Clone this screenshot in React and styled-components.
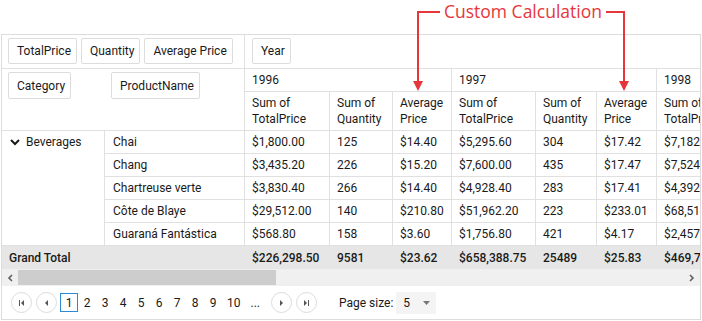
import React from "react";
import styled, { createGlobalStyle, css } from "styled-components";

const RED = "#e5373b";
const LINE = "#e0e0e0";

const GlobalStyle = createGlobalStyle`
  body {
    margin: 0;
    background: #fff;
    font-family: Roboto, "Open Sans", sans-serif;
    font-size: 12px;
    color: #1a1a1a;
  }
`;

const years = ["1996", "1997", "1998"];
const measures = ["Sum of TotalPrice", "Sum of Quantity", "Average Price"];

const rows = [
  { name: "Chai", values: ["$1,800.00", "125", "$14.40", "$5,295.60", "304", "$17.42", "$7,182.00", "399", "$18.00"] },
  { name: "Chang", values: ["$3,435.20", "226", "$15.20", "$7,600.00", "435", "$17.47", "$7,524.00", "396", "$19.00"] },
  { name: "Chartreuse verte", values: ["$3,830.40", "266", "$14.40", "$4,928.40", "283", "$17.41", "$4,392.00", "244", "$18.00"] },
  { name: "Côte de Blaye", values: ["$29,512.00", "140", "$210.80", "$51,962.20", "223", "$233.01", "$68,510.00", "260", "$263.50"] },
  { name: "Guaraná Fantástica", values: ["$568.80", "158", "$3.60", "$1,756.80", "421", "$4.17", "$2,457.00", "546", "$4.50"] },
];

const totals = ["$226,298.50", "9581", "$23.62", "$658,388.75", "25489", "$25.83", "$469,771.34", "16247", "$28.91"];

const App = () => {
  return (
    <Page>
      <GlobalStyle />
      <Callout>Custom Calculation</Callout>
      <Arrows width="702" height="100" viewBox="0 0 702 100">
        <path d="M440 12 H418 V82" />
        <polygon points="413,81 423,81 418,91" />
        <path d="M606 12 H624 V82" />
        <polygon points="619,81 629,81 624,91" />
      </Arrows>

      <Pivot>
        <Viewport>
          <Grid>
            <FieldZone $span={2} $divider>
              <FieldButton>TotalPrice</FieldButton>
              <FieldButton>Quantity</FieldButton>
              <FieldButton>Average Price</FieldButton>
            </FieldZone>
            <FieldZone $span={9} $inset={7}>
              <FieldButton>Year</FieldButton>
            </FieldZone>

            <RowFieldCell>
              <FieldButton $tall>Category</FieldButton>
            </RowFieldCell>
            <RowFieldCell $divider>
              <FieldButton $tall>ProductName</FieldButton>
            </RowFieldCell>
            {years.map((y) => (
              <YearCell key={y}>{y}</YearCell>
            ))}
            {years.map((y) =>
              measures.map((m) => <MeasureCell key={y + m}>{m}</MeasureCell>)
            )}

            {rows.map((r, i) => (
              <React.Fragment key={r.name}>
                {i === 0 && (
                  <GroupCell $rows={rows.length}>
                    <Chevron width="10" height="7" viewBox="0 0 10 7">
                      <polyline points="1,1 5,5 9,1" />
                    </Chevron>
                    Beverages
                  </GroupCell>
                )}
                <ItemCell>{r.name}</ItemCell>
                {r.values.map((v, j) => (
                  <ValueCell key={j}>{v}</ValueCell>
                ))}
              </React.Fragment>
            ))}

            <TotalCell $span={2} $inset={7}>Grand Total</TotalCell>
            {totals.map((v, j) => (
              <TotalCell key={j}>{v}</TotalCell>
            ))}
          </Grid>
        </Viewport>

        <Scrollbar>
          <ScrollArrow>
            <svg width="6" height="8" viewBox="0 0 6 8">
              <polyline points="5,1 2,4 5,7" />
            </svg>
          </ScrollArrow>
          <Track>
            <Thumb $width={258} />
          </Track>
          <ScrollArrow>
            <svg width="6" height="8" viewBox="0 0 6 8">
              <polyline points="1,1 4,4 1,7" />
            </svg>
          </ScrollArrow>
        </Scrollbar>

        <Pager>
          <NavButton>
            <svg width="5" height="6" viewBox="0 0 5 6">
              <rect x="0" y="0" width="1" height="6" />
              <polygon points="5,0 5,6 2,3" />
            </svg>
          </NavButton>
          <NavButton $gap={3}>
            <svg width="3" height="6" viewBox="0 0 3 6">
              <polygon points="3,0 3,6 0,3" />
            </svg>
          </NavButton>
          {["1", "2", "3", "4", "5", "6", "7", "8", "9", "10", "..."].map((p) => (
            <PageLink key={p} $active={p === "1"}>
              {p}
            </PageLink>
          ))}
          <NavButton $lead={6}>
            <svg width="3" height="6" viewBox="0 0 3 6">
              <polygon points="0,0 0,6 3,3" />
            </svg>
          </NavButton>
          <NavButton>
            <svg width="5" height="6" viewBox="0 0 5 6">
              <polygon points="0,0 0,6 3,3" />
              <rect x="4" y="0" width="1" height="6" />
            </svg>
          </NavButton>
          <SizeLabel>Page size:</SizeLabel>
          <SizeSelect>
            5
            <svg width="7" height="4" viewBox="0 0 7 4">
              <polygon points="0,0 7,0 3.5,4" />
            </svg>
          </SizeSelect>
        </Pager>
      </Pivot>
    </Page>
  );
};

export default App;

const Page = styled.div`
  position: relative;
  width: 702px;
  height: 321px;
  overflow: hidden;
`;

const Callout = styled.div`
  height: 34px;
  padding-left: 444px;
  box-sizing: border-box;
  font-family: "Open Sans", sans-serif;
  font-size: 17.5px;
  line-height: 22px;
  color: ${RED};
`;

const Arrows = styled.svg`
  position: absolute;
  top: 0;
  left: 0;
  z-index: 2;
  pointer-events: none;
  path {
    fill: none;
    stroke: ${RED};
    stroke-width: 2;
  }
  polygon {
    fill: ${RED};
  }
`;

const Pivot = styled.div`
  margin-left: 1px;
  width: 700px;
  height: 286px;
  box-sizing: border-box;
  border: 1px solid #dcdcdc;
  display: flex;
  flex-direction: column;
`;

const Viewport = styled.div`
  overflow: hidden;
  flex: 0 0 auto;
`;

const Grid = styled.div`
  display: grid;
  grid-template-columns: 103px 140px 85px 63px 59px 84px 61px 60px 85px 63px 59px;
  grid-template-rows: 34px 23px 39px repeat(6, 23px);
  width: max-content;
`;

const cellBase = css`
  box-sizing: border-box;
  border-right: 1px solid ${LINE};
  border-bottom: 1px solid ${LINE};
  padding: 0 2px 0 7px;
  display: flex;
  align-items: center;
  white-space: nowrap;
  overflow: hidden;
`;

const FieldZone = styled.div`
  grid-column: span ${(p) => p.$span};
  box-sizing: border-box;
  border-bottom: 1px solid ${LINE};
  border-right: ${(p) => (p.$divider ? `1px solid ${LINE}` : "none")};
  display: flex;
  align-items: flex-start;
  gap: 4px;
  padding: 3px 0 0 ${(p) => p.$inset || 6}px;
`;

const FieldButton = styled.button`
  font: inherit;
  color: inherit;
  height: ${(p) => (p.$tall ? 27 : 26)}px;
  padding: 0 5px 0 8px;
  border: 1px solid #dcdcdc;
  border-radius: 2px;
  background: #fff;
  white-space: nowrap;
`;

const RowFieldCell = styled.div`
  grid-row: span 2;
  box-sizing: border-box;
  border-bottom: 1px solid ${LINE};
  border-right: ${(p) => (p.$divider ? `1px solid ${LINE}` : "none")};
  display: flex;
  align-items: flex-start;
  padding: 3px 0 0 6px;
`;

const YearCell = styled.div`
  ${cellBase};
  grid-column: span 3;
`;

const MeasureCell = styled.div`
  ${cellBase};
  white-space: normal;
  line-height: 16px;
`;

const GroupCell = styled.div`
  ${cellBase};
  grid-row: span ${(p) => p.$rows};
  align-items: flex-start;
  padding-left: 8px;
  line-height: 22px;
`;

const Chevron = styled.svg`
  margin: 8px 6px 0 0;
  polyline {
    fill: none;
    stroke: #1a1a1a;
    stroke-width: 2;
  }
`;

const ItemCell = styled.div`
  ${cellBase};
  padding-left: 8px;
`;

const ValueCell = styled.div`
  ${cellBase};
`;

const TotalCell = styled.div`
  grid-column: span ${(p) => p.$span || 1};
  display: flex;
  align-items: center;
  padding-left: ${(p) => p.$inset || 7}px;
  background: #e6e6e6;
  font-weight: 500;
  white-space: nowrap;
  overflow: hidden;
`;

const Scrollbar = styled.div`
  display: flex;
  height: 17px;
  background: #f0f0f0;
`;

const ScrollArrow = styled.div`
  width: 16px;
  display: flex;
  align-items: center;
  justify-content: center;
  polyline {
    fill: none;
    stroke: #606060;
    stroke-width: 1.6;
  }
`;

const Track = styled.div`
  flex: 1;
  padding: 1px 0;
`;

const Thumb = styled.div`
  width: ${(p) => p.$width}px;
  height: 100%;
  background: #cdcdcd;
`;

const Pager = styled.div`
  display: flex;
  align-items: center;
  height: 33px;
  padding-left: 9px;
`;

const NavButton = styled.button`
  width: 21px;
  height: 21px;
  padding: 0;
  margin: 0 ${(p) => (p.$gap !== undefined ? p.$gap : 4)}px 0 ${(p) => p.$lead || 0}px;
  border: 1px solid #dcdcdc;
  border-radius: 50%;
  background: #fff;
  display: flex;
  align-items: center;
  justify-content: center;
  fill: #555;
`;

const PageLink = styled.span`
  box-sizing: border-box;
  min-width: 18px;
  height: 19px;
  padding: 0 4px;
  display: flex;
  align-items: center;
  justify-content: center;
  border: 1px solid ${(p) => (p.$active ? "#2b8ad6" : "transparent")};
`;

const SizeLabel = styled.span`
  margin-left: 18px;
`;

const SizeSelect = styled.div`
  margin-left: 3px;
  width: 40px;
  height: 22px;
  box-sizing: border-box;
  padding: 0 6px 0 7px;
  background: #f4f4f4;
  display: flex;
  align-items: center;
  justify-content: space-between;
  fill: #777;
`;
